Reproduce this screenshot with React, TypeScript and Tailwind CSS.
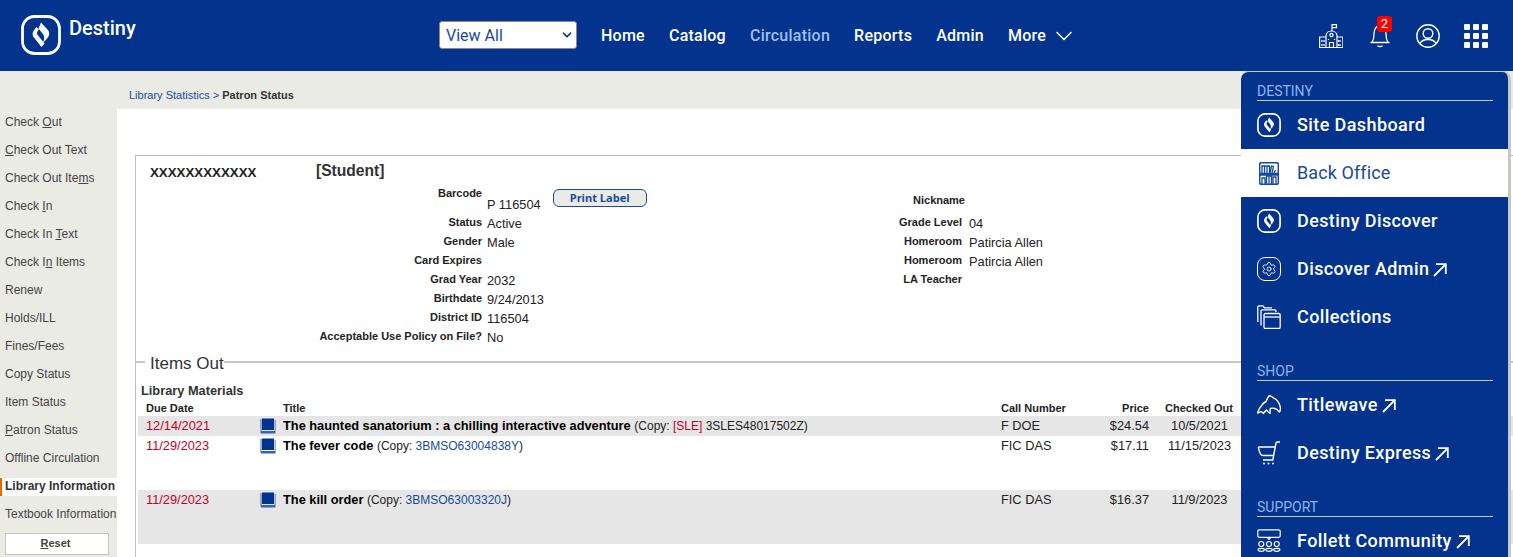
import React from 'react';
import { ChevronDown, Settings } from 'lucide-react';

const sidebarLinks: React.ReactNode[] = [
  <>Check <u>O</u>ut</>,
  <><u>C</u>heck Out Text</>,
  <>Check Out Ite<u>m</u>s</>,
  <>Check <u>I</u>n</>,
  <>Check In <u>T</u>ext</>,
  <>Check I<u>n</u> Items</>,
  <>Renew</>,
  <>Holds/ILL</>,
  <>Fines/Fees</>,
  <>Copy Status</>,
  <>Item Status</>,
  <><u>P</u>atron Status</>,
  <>Offline Circulation</>,
];

function LogoMark({ className }: { className?: string }) {
  return (
    <svg viewBox="0 0 40 40" className={className} fill="none">
      <rect x="1.500" y="1.500" width="37" height="37" rx="12" stroke="currentColor" strokeWidth="2.800" />
      <path d="M20 7.500L26.500 14.500C29 17.500 28.500 20.500 26.500 23L21.500 28.500C23.500 24.500 24 21.500 21.500 18.500L17.500 13.500Z" fill="currentColor" />
      <path d="M15.500 12C12 16 10.500 18.500 12.500 22L20.500 32L23.500 28.500L17.500 21C15.500 19 15.500 17.500 17 15.500L18 14.500Z" fill="currentColor" />
    </svg>
  );
}

function SchoolIcon() {
  return (
    <svg viewBox="0 0 24 24" className="w-6 h-6" fill="none" stroke="currentColor" strokeWidth="1.200">
      <path d="M13 7V.6h4.500v3H13" />
      <path d="M7 12c0-3 2.500-5 5.500-5S18 9 18 12v11.500H7z" />
      <circle cx="12.500" cy="11" r="1.600" />
      <path d="M7 13H.6v10.500h23.300V13H18" />
      <path d="M10.500 23.500v-5h4v5M3 16v2M3 20v2M9.500 15v1M15.500 15v1M21 16v2M21 20v2M5 16v2M5 20v2M19.500 16v2M19.500 20v2" />
    </svg>
  );
}

function BellIcon() {
  return (
    <svg viewBox="0 0 20 25" className="w-5 h-[25px]" fill="none" stroke="currentColor" strokeWidth="1.300">
      <path d="M.5 19.500h19M2 19.500c1.500-2.500 2-5 2-8.500C4 6 6.500 2.500 10 2.500S16 6 16 11c0 3.500.5 6 2 8.500" />
      <path d="M7.500 22.800c1.500 1 3.500 1 5 0" />
    </svg>
  );
}

function UserIcon() {
  return (
    <svg viewBox="0 0 24 24" className="w-6 h-6" fill="none" stroke="currentColor" strokeWidth="1.400">
      <circle cx="12" cy="12" r="11.200" />
      <circle cx="12" cy="9.500" r="4.800" />
      <path d="M4 19.500C5.500 16.500 8.500 15.500 12 15.500s6.500 1 8 4" />
    </svg>
  );
}

function AppsIcon() {
  return (
    <div className="grid grid-cols-[6px_6px_6px] gap-[3px] w-6 h-6">
      {Array.from({ length: 9 }).map((_, i) => (
        <span key={i} className="bg-white rounded-[1px] w-[6px] h-[6px]" />
      ))}
    </div>
  );
}

function OfficeIcon() {
  return (
    <svg viewBox="0 0 20 23" className="w-5 h-[23px]" fill="none" stroke="currentColor" strokeWidth="1.300">
      <rect x=".7" y=".7" width="18.600" height="21.600" rx="1.500" strokeWidth="1.500" />
      <path d="M.7 11.500h18.600M.7 13h18.600" />
      <path d="M3 11V4h2.500v7M5.500 4H8v7M8 4h2.500v7M11 11l1.500-7 2 .5L13 11M15 11l1.500-3" />
      <path d="M3 22v-6h3v6M7.500 22v-8h2.500v8M10 22v-8h2.500v8M14 22v-7h3v7" />
    </svg>
  );
}

function GearBoxIcon() {
  return (
    <div className="w-6 h-6 border-[1.5px] border-white rounded-[8px] flex items-center justify-center">
      <Settings className="w-4 h-4" strokeWidth={1.300} />
    </div>
  );
}

function FoldersIcon() {
  return (
    <svg viewBox="0 0 24 24" className="w-6 h-6" fill="none" stroke="currentColor" strokeWidth="1.300">
      <path d="M.8 17V1.800C.8 1.200 1.200.8 1.800.8H6l1.500 2H15" />
      <path d="M4 20.500V5.800c0-.6.4-1 1-1h13c.6 0 1 .4 1 1V7" />
      <rect x="7" y="8.500" width="16.200" height="15" rx="1.500" />
      <path d="M7 12h16.200" />
    </svg>
  );
}

function DolphinIcon() {
  return (
    <svg viewBox="0 0 24 20" className="w-6 h-5" fill="none" stroke="currentColor" strokeWidth="1.400" strokeLinejoin="round">
      <path d="M.5 18C2 14 3.500 11.500 5 10C6 8.500 7 7.500 9 6.500C10 4 11 2 12.300.5C13.500 1 15 1.800 16.300 2.800C19.500 4 22.500 8 23.500 13C23.500 15 23 16.500 22.300 17C21 15.500 20 14 18 13.500C16 13 14.500 13 13.300 13.500C13 15 13.300 17 13 18.300C11.500 17.500 10.500 16.500 9.700 15C8.500 15.500 7.500 17 6.300 18.500C5.500 17 4.500 16.500 3.500 16.800C2.500 17.500 1.500 18 .5 18Z" />
    </svg>
  );
}

function CartIcon() {
  return (
    <svg viewBox="0 0 24 24" className="w-6 h-6" fill="none" stroke="currentColor" strokeWidth="1.400">
      <path d="M23 1h-2.800c-.7 0-1 .3-1.200 1L15.800 19H6" />
      <path d="M1.300 6H18.500M1.300 6C1.800 9 2.500 11 3.500 13C4 14 4.500 14.500 6 14.500H16.700" />
      <circle cx="7" cy="22.500" r="1" fill="currentColor" stroke="none" />
      <circle cx="11.500" cy="22.500" r="1" fill="currentColor" stroke="none" />
      <circle cx="16" cy="22.500" r="1" fill="currentColor" stroke="none" />
    </svg>
  );
}

function CommunityIcon() {
  return (
    <svg viewBox="0 0 24 24" className="w-6 h-6" fill="none" stroke="currentColor" strokeWidth="1.200">
      <rect x=".8" y=".8" width="22.400" height="7.500" rx="1.500" />
      <path d="M10 8.300l2 2 2-2" />
      <circle cx="4.300" cy="15" r="2.500" />
      <circle cx="12" cy="15" r="2.500" />
      <circle cx="19.700" cy="15" r="2.500" />
      <path d="M.8 20.500c1 2.500 6 2.500 7 0M8.500 20.500c1 2.500 6 2.500 7 0M16.200 20.500c1 2.500 6 2.500 7 0" />
      <path d="M.8 20.500c1-1.500 6-1.500 7 0M8.500 20.500c1-1.500 6-1.500 7 0M16.200 20.500c1-1.500 6-1.500 7 0" />
    </svg>
  );
}

function OutArrow() {
  return (
    <svg viewBox="0 0 14 14" className="w-[14px] h-[14px] ml-1 mt-[1px]" fill="none" stroke="currentColor" strokeWidth="1.800">
      <path d="M1 13L12.800 1.200M3 1.200h9.800V11" />
    </svg>
  );
}

function BookIcon() {
  return (
    <svg viewBox="0 0 16 16" className="w-4 h-4">
      <path d="M2 .5h12v11.500H2z" fill="#00338d" />
      <path d="M.5 1v13c0 1 .5 1.500 1.500 1.500h13.500V2h-.8v11H2.500c-.7 0-1 .3-1 .5V1z" fill="#3c62ad" />
    </svg>
  );
}

function MenuItem({ icon, label, external, active }: { icon: React.ReactNode; label: string; external?: boolean; active?: boolean }) {
  return (
    <div className={`h-12 flex items-center pl-4 ${active ? 'bg-white text-[#174a9f]' : 'text-white'}`}>
      <span className="w-6 flex justify-center shrink-0">{icon}</span>
      <span className={`ml-4 pb-[2px] text-[18px] ${active ? 'font-normal tracking-[0.1px]' : 'font-medium tracking-[0.4px]'}`}>{label}</span>
      {external && <OutArrow />}
    </div>
  );
}

function MenuLabel({ text, first }: { text: string; first?: boolean }) {
  return (
    <div className={`${first ? 'h-[29px]' : 'h-10'} ml-4 mr-[15px] flex items-end border-b border-[#c8c8c0] text-[14px] leading-[18px] text-[#8eb3f0]`}>
      {text}
    </div>
  );
}

function InfoRow({ label, value, wide, pr }: { label: string; value?: string; wide?: boolean; pr?: boolean }) {
  return (
    <div className="flex h-[19px]">
      <div className={`${wide ? 'w-[313px]' : 'w-[351px] pr-[5px]'} ${wide && !pr ? 'pr-[7px]' : ''} ${pr ? 'pr-1' : ''} text-right text-[11px] leading-[15px] font-bold text-[#222]`}>{label}</div>
      <div className="text-[12.8px] leading-[18px] text-[#222]">{value}</div>
    </div>
  );
}

function ItemRow({ due, title, copy, call, price, out, shaded, tall }: {
  due: string; title: string; copy: React.ReactNode; call: string; price: string; out: string; shaded?: boolean; tall?: boolean;
}) {
  return (
    <div className={`grid grid-cols-[122px_23px_718px_112px_36px_1fr] ${tall ? 'h-[54px]' : 'h-5'} ${shaded ? 'bg-[#e6e6e6]' : ''} text-[12.8px] leading-[19px] text-[#222]`}>
      <div className="pl-2 text-[#c8001e]">{due}</div>
      <div className="pt-[2px]"><BookIcon /></div>
      <div className="truncate">
        <span className="font-bold text-black">{title}</span>{' '}
        <span className="text-[12px]">{copy}</span>
      </div>
      <div>{call}</div>
      <div className="text-right -ml-4 w-[52px]">{price}</div>
      <div className="ml-4 w-[69px] text-center">{out}</div>
    </div>
  );
}

export default function App() {
  return (
    <div className="relative w-[1513px] h-[557px] overflow-hidden bg-white font-['Liberation_Sans',Arial,sans-serif]">
      <header className="h-[71px] bg-[#03338c] flex text-white font-['Roboto',sans-serif]">
        <div className="w-[439px] shrink-0 flex pl-[21px] pt-[15px]">
          <LogoMark className="w-10 h-10" />
          <span className="ml-2 text-[20px] leading-[26px] font-medium">Destiny</span>
        </div>
        <div className="pt-[21px] flex">
          <div className="w-[138px] h-7 bg-white border border-[#8a8a8a] rounded-[3px] flex items-center justify-between pl-[6px] pr-[2px] text-[#174a9f] text-[16px]">
            <span className="pt-[1px]">View All</span>
            <ChevronDown className="w-[14px] h-[14px] text-[#00338d]" strokeWidth={3} />
          </div>
        </div>
        <nav className="flex items-center h-[71px] ml-6 gap-6 text-[16px] font-medium tracking-[0.25px]">
          <span>Home</span>
          <span>Catalog</span>
          <span className="text-[#9dc0f5]">Circulation</span>
          <span>Reports</span>
          <span>Admin</span>
          <span className="flex items-center gap-1">More <ChevronDown className="w-7 h-7" strokeWidth={1.300} /></span>
        </nav>
        <div className="ml-auto flex items-center h-[71px] pr-[25px]">
          <SchoolIcon />
          <div className="relative ml-[27px]">
            <BellIcon />
            <span className="absolute -top-[7px] left-[7px] w-[15px] h-4 bg-[#ff0000] rounded-[3px] text-[13px] leading-4 text-center">2</span>
          </div>
          <div className="ml-[26px]"><UserIcon /></div>
          <div className="ml-6"><AppsIcon /></div>
        </div>
      </header>

      <div className="flex h-[486px]">
        <aside className="w-[117px] shrink-0 bg-[#ebebe6] pt-[37px] text-[12px] text-[#444]">
          {sidebarLinks.map((link, i) => (
            <div key={i} className="h-7 pl-[5px] leading-7">{link}</div>
          ))}
          <div className="h-[18px] mt-[6px] bg-white border-l-[2px] border-[#e06c00] pl-[3px] leading-[17px] font-bold text-[#333] whitespace-nowrap">Library Information</div>
          <div className="h-[33px] pl-[5px] leading-9 whitespace-nowrap">Textbook Information</div>
          <div className="ml-[5px] mt-1 w-[104px] h-[22px] bg-white border border-[#c4c4c4] text-center text-[11px] font-bold leading-[19px] pr-[3px] text-[#444]"><u>R</u>eset</div>
        </aside>

        <main className="flex-1 min-w-0">
          <div className="h-[38px] bg-[#ebebe6] pl-3 pt-[18px] text-[11px] leading-3">
            <span className="text-[#174a9f]">Library Statistics &gt; </span>
            <span className="font-bold text-[#333]">Patron Status</span>
          </div>
          <div className="pl-[18px] pt-[46px]">
            <section className="border-l border-t border-[#bdbdbd] h-[500px]">
              <div className="flex h-[30px] items-start">
                <div className="w-[180px] pl-[14px] pt-[9px] text-[13.3px] leading-4 font-bold text-[#222]">XXXXXXXXXXXX</div>
                <div className="pt-[6px] text-[15.6px] leading-[18px] font-bold text-[#333]">[Student]</div>
              </div>
              <div className="flex">
                <div className="w-[520px] shrink-0">
                  <div className="flex h-[29px]">
                    <div className="w-[351px] pr-[5px] text-right text-[11px] leading-[15px] font-bold text-[#222]">Barcode</div>
                    <div className="pt-[9px] text-[12.8px] leading-[20px] text-[#222] whitespace-nowrap">P 116504</div>
                    <div className="ml-3 mt-[3px] w-[94px] h-[18px] bg-[#ebebe6] border border-[#174a9f] rounded-[6px] text-center text-[11px] leading-[16px] font-bold text-[#174a9f] shrink-0 font-['Open_Sans',sans-serif]">Print Label</div>
                  </div>
                  <InfoRow label="Status" value="Active" />
                  <InfoRow label="Gender" value="Male" />
                  <InfoRow label="Card Expires" />
                  <InfoRow label="Grad Year" value="2032" />
                  <InfoRow label="Birthdate" value="9/24/2013" />
                  <InfoRow label="District ID" value="116504" />
                  <InfoRow label="Acceptable Use Policy on File?" value="No" />
                </div>
                <div>
                  <div className="h-[29px] pt-[7px]">
                    <div className="w-[313px] pr-1 text-right text-[11px] leading-[15px] font-bold text-[#222]">Nickname</div>
                  </div>
                  <InfoRow wide label="Grade Level" value="04" />
                  <InfoRow wide label="Homeroom" value="Patircia Allen" />
                  <InfoRow wide label="Homeroom" value="Patircia Allen" />
                  <InfoRow wide label="LA Teacher" />
                </div>
              </div>
              <div className="relative h-[2px] mt-[13px] bg-[#c8c8c8]">
                <span className="absolute left-[9px] -top-[6px] bg-white pl-[5px] text-[17px] leading-[18px] text-[#333]">Items Out</span>
              </div>
              <div className="pl-[5px] pt-[21px] text-[12.8px] leading-[14px] font-bold text-[#333]">Library Materials</div>
              <div className="ml-[2px] mt-[3px]">
                <div className="grid grid-cols-[122px_23px_718px_112px_36px_1fr] h-[15px] text-[11px] leading-[15px] font-bold text-[#222]">
                  <div className="pl-2">Due Date</div>
                  <div />
                  <div>Title</div>
                  <div>Call Number</div>
                  <div className="text-right -ml-4 w-[52px]">Price</div>
                  <div className="ml-4 whitespace-nowrap">Checked Out</div>
                </div>
                <ItemRow shaded due="12/14/2021" title="The haunted sanatorium : a chilling interactive adventure"
                  copy={<>(Copy: <span className="text-[#c8001e]">[SLE]</span> 3SLES48017502Z)</>}
                  call="F DOE" price="$24.54" out="10/5/2021" />
                <ItemRow tall due="11/29/2023" title="The fever code"
                  copy={<>(Copy: <span className="text-[#174a9f]">3BMSO63004838Y</span>)</>}
                  call="FIC DAS" price="$17.11" out="11/15/2023" />
                <ItemRow tall shaded due="11/29/2023" title="The kill order"
                  copy={<>(Copy: <span className="text-[#174a9f]">3BMSO63003320J</span>)</>}
                  call="FIC DAS" price="$16.37" out="11/9/2023" />
              </div>
            </section>
          </div>
        </main>
      </div>

      <div className="absolute left-[1241px] top-[71px] w-[270px] h-[486px] bg-[#03338c] rounded-t-[8px] border-t border-r-[3px] border-[#c8c8c0] font-['Roboto',sans-serif] overflow-hidden">
        <MenuLabel first text="DESTINY" />
        <MenuItem icon={<LogoMark className="w-6 h-6" />} label="Site Dashboard" />
        <MenuItem active icon={<OfficeIcon />} label="Back Office" />
        <MenuItem icon={<LogoMark className="w-6 h-6" />} label="Destiny Discover" />
        <MenuItem icon={<GearBoxIcon />} label="Discover Admin" external />
        <MenuItem icon={<FoldersIcon />} label="Collections" />
        <MenuLabel text="SHOP" />
        <MenuItem icon={<DolphinIcon />} label="Titlewave" external />
        <MenuItem icon={<CartIcon />} label="Destiny Express" external />
        <MenuLabel text="SUPPORT" />
        <MenuItem icon={<CommunityIcon />} label="Follett Community" external />
      </div>
    </div>
  );
}
